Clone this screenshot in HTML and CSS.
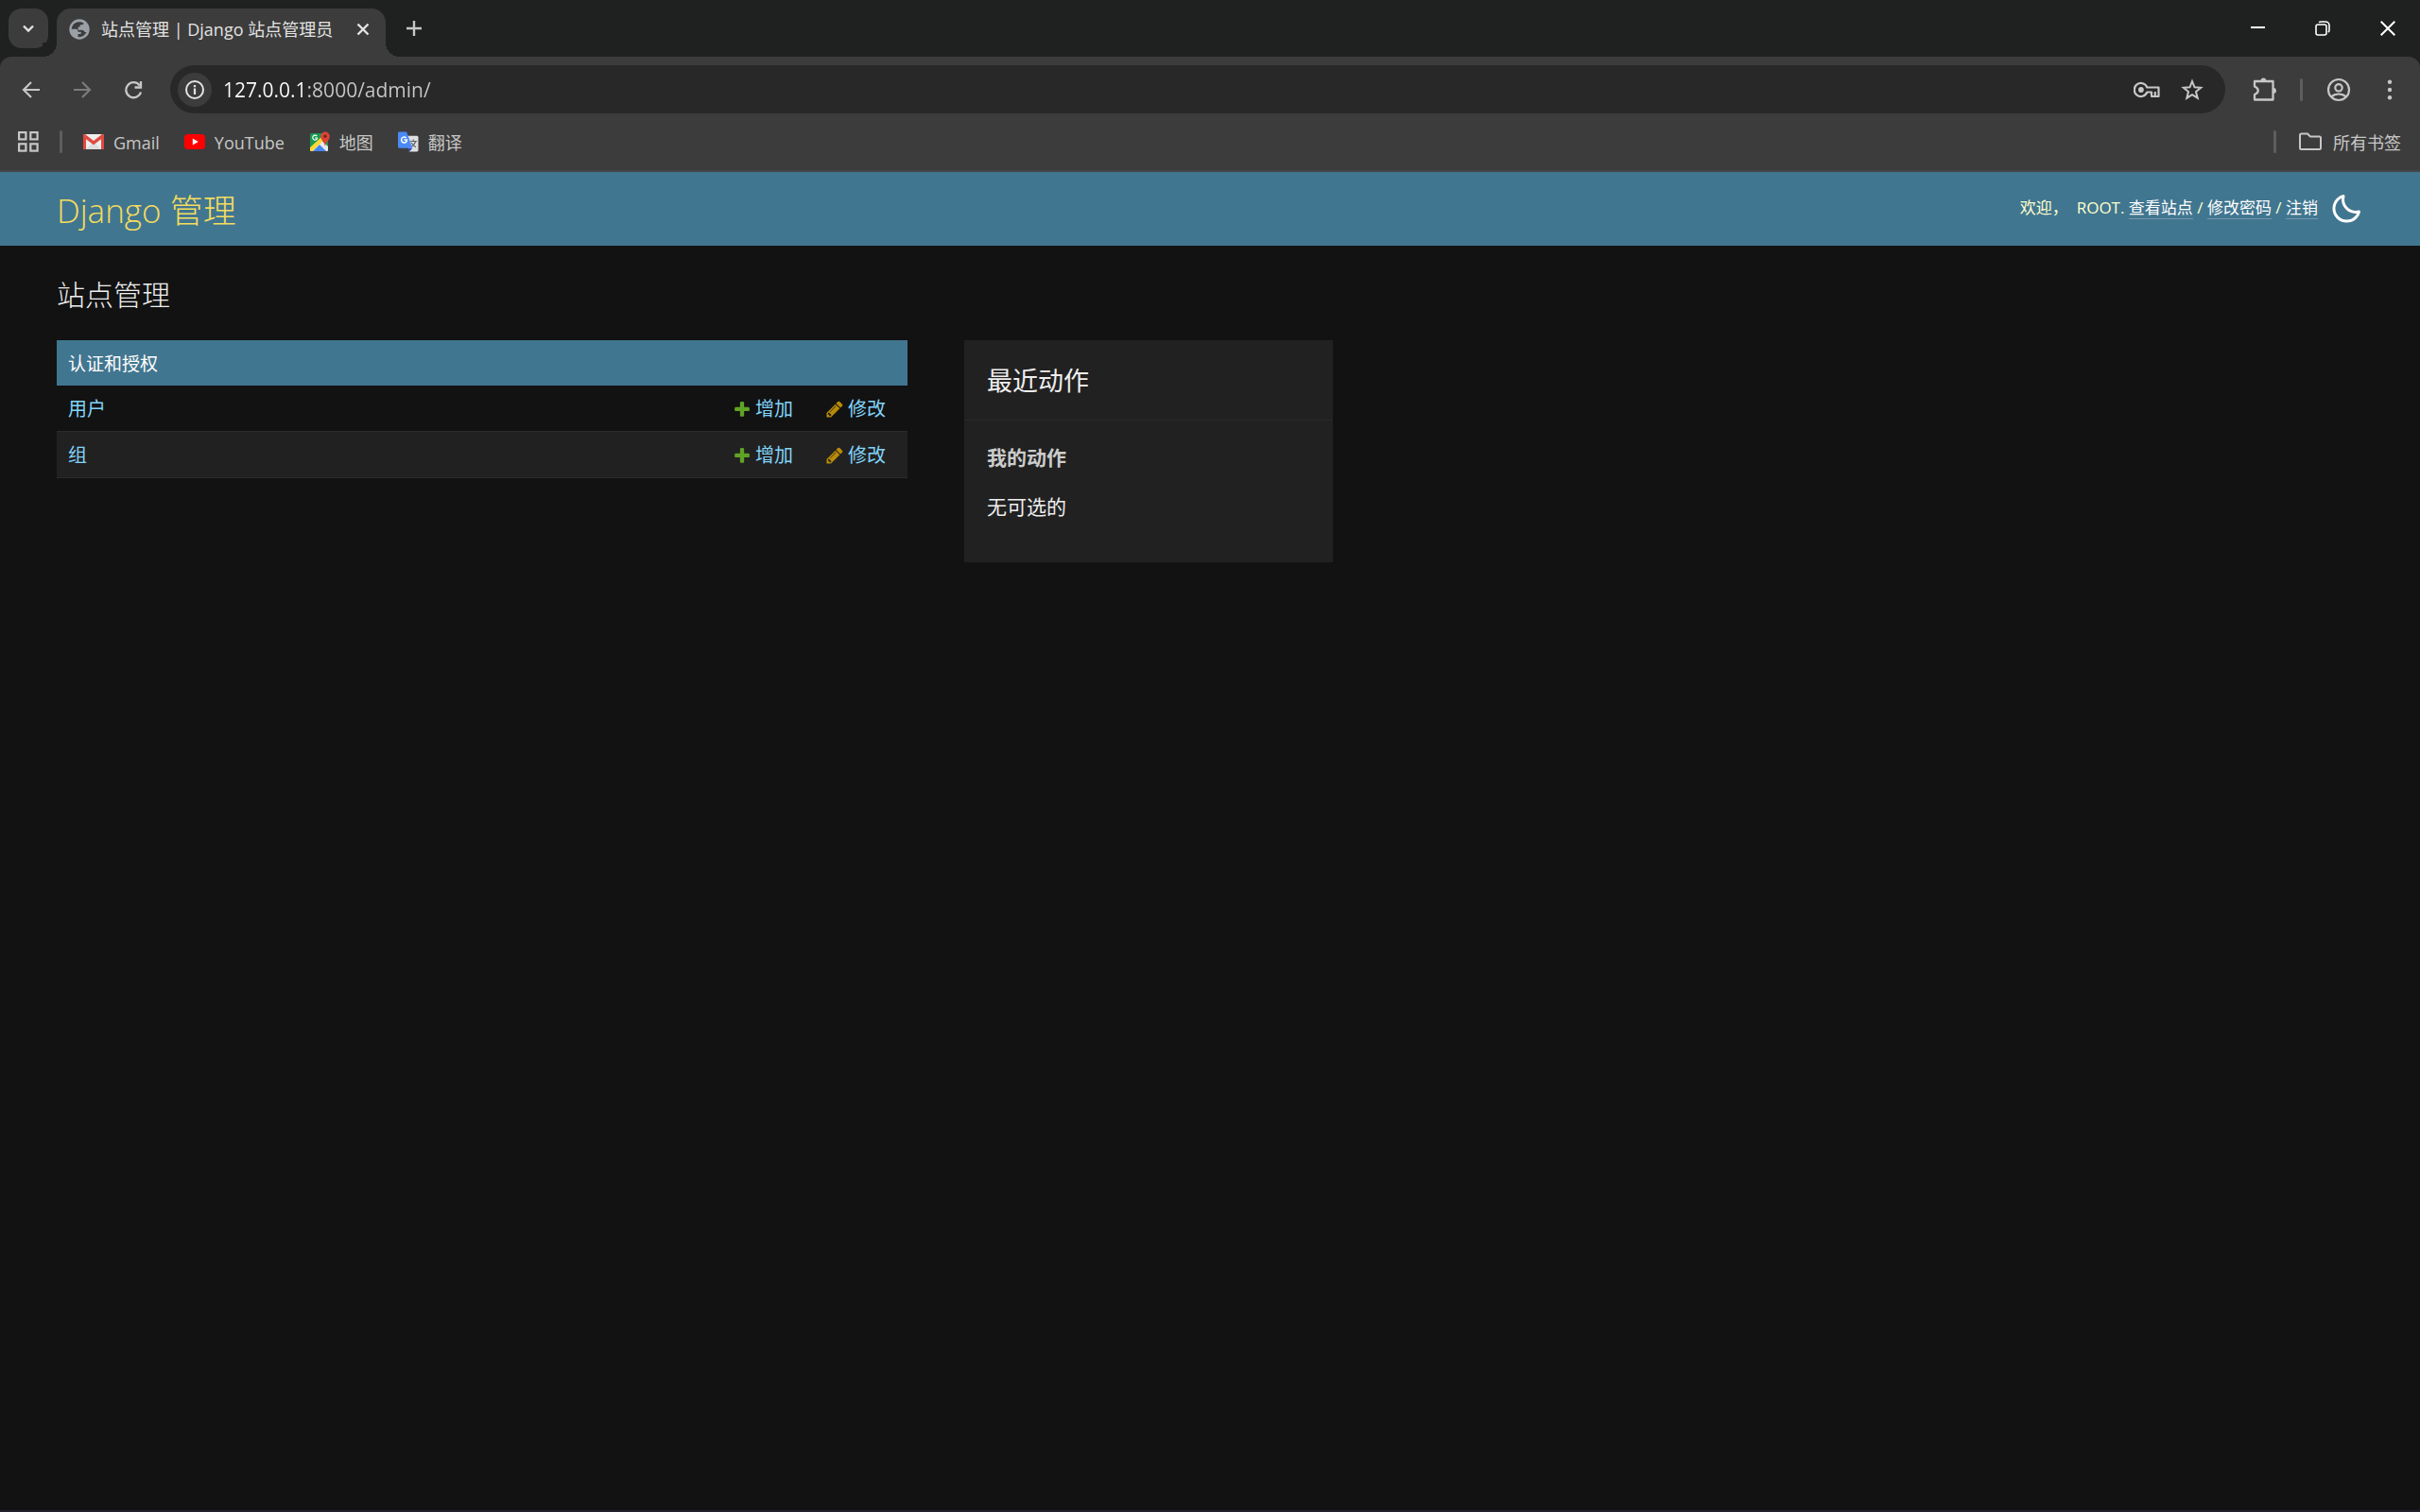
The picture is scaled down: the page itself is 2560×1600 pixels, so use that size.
FILE: index.html
```html
<!DOCTYPE html>
<html lang="zh-hans">
<head>
    <meta charset="UTF-8">
    <meta name="viewport" content="width=device-width, initial-scale=1.0">
    <title>站点管理 | Django 站点管理员</title>
    <link rel="stylesheet" href="styles.css">
</head>
<body>
    <div class="browser">
        <div class="tab-strip">
            <button class="tab-search" aria-label="搜索标签页">
                <svg width="14" height="14" viewBox="0 0 14 14"><path d="M2 4.5l5 5 5-5" fill="none" stroke="#e3e3e3" stroke-width="2.4"/></svg>
            </button>
            <div class="tab">
                <svg width="22" height="22" viewBox="0 0 22 22">
                    <circle cx="11" cy="11" r="10.7" fill="#9aa0a6"/>
                    <path d="M10 3.2C6 3.600 3 6.500 2.800 10.800H7c2 0 2.500 1.200 2.500 3h3.200v2.200H9.500v3c3.500.7 7.500-1.500 9-5-1.500.3-2.500-.2-3-1.700l-2.300-.6H9.600V8.500h2.100V6.200h2.200c1 0 1.500-.7 1.500-1.700-1.500-1-3.500-1.500-5.400-1.300z" fill="#3c3c3c"/>
                </svg>
                <span class="tab-title">站点管理 | Django 站点管理员</span>
                <button class="tab-close" aria-label="关闭">
                    <svg width="14" height="14" viewBox="0 0 14 14"><path d="M1.500 1.500l11 11M12.500 1.500l-11 11" stroke="#e3e3e3" stroke-width="2.400"/></svg>
                </button>
            </div>
            <button class="new-tab" aria-label="新标签页">
                <svg width="16" height="16" viewBox="0 0 16 16"><path d="M8 0v16M0 8h16" stroke="#c7c7c7" stroke-width="2.400"/></svg>
            </button>
            <div class="window-controls">
                <button aria-label="最小化"><svg width="16" height="16" viewBox="0 0 16 16"><path d="M1 7h15" stroke="#fff" stroke-width="2"/></svg></button>
                <button aria-label="还原"><svg width="16" height="16" viewBox="0 0 16 16" fill="none" stroke="#fff" stroke-width="1.600"><rect x="1" y="4" width="11" height="11" rx="2"/><path d="M4 1.500C5 1 5.500 1 6.500 1H11a4 4 0 0 1 4 4v4.500c0 1-.2 2-1 2.700"/></svg></button>
                <button aria-label="关闭窗口"><svg width="16" height="16" viewBox="0 0 16 16"><path d="M.7.7l14.600 14.600M15.300.7L.7 15.300" stroke="#fff" stroke-width="2"/></svg></button>
            </div>
        </div>

        <div class="chrome">
            <div class="toolbar">
                <button aria-label="后退"><svg width="20" height="20" viewBox="0 0 20 20"><path d="M19 10H2.500M10 2L2 10l8 8" fill="none" stroke="#c7c7c7" stroke-width="2.200"/></svg></button>
                <button aria-label="前进" disabled><svg width="20" height="20" viewBox="0 0 20 20"><path d="M1 10h16.500M10 2l8 8-8 8" fill="none" stroke="#7c7c7c" stroke-width="2.200"/></svg></button>
                <button aria-label="重新加载"><svg width="20" height="20" viewBox="0 0 20 20" fill="none" stroke="#c7c7c7" stroke-width="2.300"><path d="M16.800 5.500A8 8 0 1 0 18 12.500"/><path d="M18 1v6.500h-6.500"/></svg></button>
                <div class="omnibox">
                    <button class="site-info" aria-label="网站信息">
                        <svg width="22" height="22" viewBox="0 0 22 22"><circle cx="11" cy="11" r="9" fill="none" stroke="#e3e3e3" stroke-width="2"/><path d="M11 9.500V16M11 6v2.200" stroke="#e3e3e3" stroke-width="2.200"/></svg>
                    </button>
                    <input type="text" class="url" value="127.0.0.1:8000/admin/" aria-label="地址栏" spellcheck="false">
                    <button aria-label="管理密码">
                        <svg width="28" height="20" viewBox="0 0 28 20" fill="none" stroke="#c7c7c7" stroke-width="2.200"><path d="M14.300 7.500A7 7 0 1 0 14.300 12.500H19v4.500h7.500V7.500z" stroke-linejoin="round"/><circle cx="7.900" cy="10" r="2.900" fill="#c7c7c7" stroke="none"/><path d="M22.800 12v4.500"/></svg>
                    </button>
                    <button aria-label="为此标签页添加书签">
                        <svg width="24" height="24" viewBox="0 0 24 24"><path d="M12 3l2.500 6.300 6.700.5-5.200 4.300 1.700 6.600-5.700-3.600-5.700 3.600L8 14.100 2.800 9.800l6.700-.5z" fill="none" stroke="#c7c7c7" stroke-width="2"/></svg>
                    </button>
                </div>
                <button aria-label="扩展程序">
                    <svg width="26" height="26" viewBox="0 0 26 26"><path d="M3 4h19.500v19.500H3v-5.500c5-1.800 5-6.500 0-8.500z" fill="none" stroke="#c7c7c7" stroke-width="2.300" stroke-linejoin="round"/><path d="M9.500 3.500a2.900 2.900 0 0 1 5.800 0zM23 11a2.900 2.900 0 0 1 0 5.800z" fill="#c7c7c7"/></svg>
                </button>
                <span class="divider"></span>
                <button aria-label="用户">
                    <svg width="26" height="26" viewBox="0 0 26 26" fill="none" stroke="#c7c7c7" stroke-width="2.200"><circle cx="13" cy="13" r="11"/><circle cx="13" cy="10.800" r="3.700"/><path d="M5.300 20.500c4-4 11.400-4 15.400 0"/></svg>
                </button>
                <button aria-label="菜单">
                    <svg width="6" height="24" viewBox="0 0 6 24" fill="#c7c7c7"><circle cx="3" cy="3.700" r="2.200"/><circle cx="3" cy="12" r="2.200"/><circle cx="3" cy="20.300" r="2.200"/></svg>
                </button>
            </div>

            <div class="bookmarks">
                <button class="apps" aria-label="应用">
                    <svg width="22" height="22" viewBox="0 0 22 22" fill="none" stroke="#c7c7c7" stroke-width="2.200"><rect x="1.100" y="1.100" width="7.300" height="7.300"/><rect x="13.300" y="1.100" width="7.300" height="7.300"/><rect x="1.100" y="13.300" width="7.300" height="7.300"/><rect x="13.300" y="13.300" width="7.300" height="7.300"/></svg>
                </button>
                <span class="divider"></span>
                <a href="#" class="bookmark">
                    <svg width="22" height="22" viewBox="0 0 22 22"><rect y="3" width="22" height="16" rx="1.500" fill="#eee"/><path d="M3 19l8-8 8 8z" fill="#ddd"/><path d="M0 4.500C0 3.500.7 3 1.500 3H2l9 7 9-7h.5c.8 0 1.500.5 1.500 1.500V19h-3V8.200l-8 6-8-6V19H1.500C.7 19 0 18.500 0 17.500z" fill="#e04a3f"/></svg>
                    <span>Gmail</span>
                </a>
                <a href="#" class="bookmark">
                    <svg width="22" height="22" viewBox="0 0 22 22"><rect y="3" width="22" height="16" rx="4" fill="#f00"/><path d="M8.800 7.500v7l6-3.500z" fill="#fff"/></svg>
                    <span>YouTube</span>
                </a>
                <a href="#" class="bookmark">
                    <svg width="22" height="22" viewBox="0 0 22 22">
                        <rect x="1" y="2" width="19" height="19" rx="1.500" fill="#1a9850"/>
                        <path d="M1 20L13 9l7 7v3.500c0 1-.5 1.500-1.500 1.500h-16z" fill="#e8eaed"/>
                        <path d="M4 21l7-7 7 7z" fill="#4285f4"/>
                        <path d="M1 17L12.500 6.500l3 2.800L3.500 21H2c-.6 0-1-.5-1-1z" fill="#fdd835"/>
                        <path d="M9 7H6.200M8.200 5A2.500 2.500 0 1 0 8.800 7" fill="none" stroke="#fff" stroke-width="1.200"/>
                        <path d="M17 .5a4.800 4.800 0 0 0-4.800 4.800C12.200 9.500 16.200 11 17 16c.8-5 4.800-6.500 4.800-10.700A4.800 4.800 0 0 0 17 .5z" fill="#db4437"/><circle cx="17" cy="5.300" r="1.700" fill="#7b231c"/>
                    </svg>
                    <span>地图</span>
                </a>
                <a href="#" class="bookmark">
                    <svg width="22" height="22" viewBox="0 0 23 22">
                        <path d="M9 4.500h12c.8 0 1.500.7 1.500 1.500v14.500c0 .8-.7 1.500-1.500 1.500h-8.500z" fill="#dedede"/>
                        <path d="M13.500 10.500h7.500M17 8.500v2M19.500 10.500c-1 3-2.800 5-5 6M14.800 12c1 2 2.700 3.700 5 5" fill="none" stroke="#5f6368" stroke-width="1.200"/>
                        <path d="M12.500 22l-1.500-4h5z" fill="#3040b0"/>
                        <path d="M1.500 0H9.500l6.500 18H1.500C.7 18 0 17.300 0 16.500v-15C0 .7.7 0 1.500 0z" fill="#4a8af4"/>
                        <path d="M6.800 9h3.100c0 4-5.900 4.300-6.100 0 0-3.500 3.700-4 5.200-2.200" fill="none" stroke="#fff" stroke-width="1.500"/>
                    </svg>
                    <span>翻译</span>
                </a>
                <span class="divider divider-right"></span>
                <a href="#" class="bookmark all-bookmarks">
                    <svg width="24" height="20" viewBox="0 0 24 20"><path d="M2.500 1.500H9l3 3h9.500A1.500 1.500 0 0 1 23 6v10.500a1.500 1.500 0 0 1-1.500 1.500h-19A1.500 1.500 0 0 1 1 16.500V3a1.500 1.500 0 0 1 1.500-1.500z" fill="none" stroke="#c7c7c7" stroke-width="2"/></svg>
                    <span>所有书签</span>
                </a>
            </div>
        </div>
    </div>

    <header id="header">
        <a href="#" class="site-name">Django 管理</a>
        <div class="user-tools">
            <span>欢迎， &nbsp;ROOT. <a href="#">查看站点</a> / <a href="#">修改密码</a> / <a href="#">注销</a></span>
            <button class="theme-toggle" aria-label="切换主题">
                <svg width="36" height="36" viewBox="0 0 24 24" fill="#fff"><path d="M20.742 13.045a8.088 8.088 0 0 1-2.077.271c-2.135 0-4.140-.83-5.646-2.336a8.025 8.025 0 0 1-2.064-7.723A1 1 0 0 0 9.730 2.034a10.014 10.014 0 0 0-4.489 2.582c-3.898 3.898-3.898 10.243 0 14.143a9.937 9.937 0 0 0 7.072 2.930 9.930 9.930 0 0 0 7.070-2.929 10.007 10.007 0 0 0 2.583-4.491 1.001 1.001 0 0 0-1.224-1.224zm-2.772 4.301a7.947 7.947 0 0 1-5.656 2.343 7.953 7.953 0 0 1-5.658-2.344c-3.118-3.119-3.118-8.195 0-11.314a7.923 7.923 0 0 1 2.060-1.483 10.027 10.027 0 0 0 2.890 7.848 9.972 9.972 0 0 0 7.848 2.891 8.036 8.036 0 0 1-1.484 2.059z"/></svg>
            </button>
        </div>
    </header>

    <main class="content">
        <h1>站点管理</h1>
        <div class="dashboard">
            <div class="module">
                <table>
                    <caption><a href="#">认证和授权</a></caption>
                    <tr>
                        <th scope="row"><a href="#">用户</a></th>
                        <td class="col-add"><a href="#" class="action"><svg width="20" height="20" viewBox="0 0 1792 1792"><use href="#icon-add"/></svg>增加</a></td>
                        <td class="col-change"><a href="#" class="action"><svg width="20" height="20" viewBox="0 0 1792 1792"><use href="#icon-change"/></svg>修改</a></td>
                    </tr>
                    <tr>
                        <th scope="row"><a href="#">组</a></th>
                        <td class="col-add"><a href="#" class="action"><svg width="20" height="20" viewBox="0 0 1792 1792"><use href="#icon-add"/></svg>增加</a></td>
                        <td class="col-change"><a href="#" class="action"><svg width="20" height="20" viewBox="0 0 1792 1792"><use href="#icon-change"/></svg>修改</a></td>
                    </tr>
                </table>
            </div>
            <aside class="recent-actions">
                <h2>最近动作</h2>
                <h3>我的动作</h3>
                <p>无可选的</p>
            </aside>
        </div>
    </main>

    <!-- shared row icons -->
    <svg class="icon-defs" width="0" height="0">
        <defs>
            <path id="icon-add" fill="#5fa225" d="M1600 796v192q0 40-28 68t-68 28h-416v416q0 40-28 68t-68 28h-192q-40 0-68-28t-28-68v-416h-416q-40 0-68-28t-28-68v-192q0-40 28-68t68-28h416v-416q0-40 28-68t68-28h192q40 0 68 28t28 68v416h416q40 0 68 28t28 68z"/>
            <path id="icon-change" fill="#b78b08" d="M491 1536l91-91-235-235-91 91v107h128v128h107zm523-928q0-22-22-22-10 0-17 7l-542 542q-7 7-7 17 0 22 22 22 10 0 17-7l542-542q7-7 7-17zm-54-192l416 416-832 832h-416v-416zm683 96q0 53-37 90l-166 166-416-416 166-165q36-38 90-38 53 0 91 38l235 234q37 39 37 91z"/>
        </defs>
    </svg>
</body>
</html>
```

FILE: styles.css
```css
* {
    box-sizing: border-box;
}

body {
    margin: 0;
    min-height: 100vh;
    display: flex;
    flex-direction: column;
    background-color: #121212;
    border-bottom: 2px solid #20202e;
    color: #eee;
    font-family: "Open Sans", "Noto Sans CJK SC", sans-serif;
    font-size: 20px;
}

a {
    color: #81d4fa;
    text-decoration: none;
}

button {
    display: flex;
    align-items: center;
    justify-content: center;
    padding: 0;
    border: none;
    background: none;
    cursor: pointer;
}

svg {
    display: block;
    flex: none;
}

/* browser window */
.browser {
    background-color: #1f2120;
}

.tab-strip {
    display: flex;
    align-items: flex-start;
    height: 60px;
    padding: 9px 0 0 9px;
}

.tab-search {
    width: 42px;
    height: 42px;
    margin-right: 9px;
    border-radius: 14px;
    background-color: #3c3c3c;
}

.tab {
    position: relative;
    display: flex;
    align-items: center;
    width: 348px;
    height: 51px;
    padding: 0 9px 8px 13px;
    border-radius: 15px 15px 0 0;
    background-color: #3c3c3c;
}

.tab::before,
.tab::after {
    content: "";
    position: absolute;
    bottom: 0;
    width: 15px;
    height: 15px;
}

.tab::before {
    left: -15px;
    background: radial-gradient(circle at 0 0, #1f2120 15px, #3c3c3c 15px);
}

.tab::after {
    right: -15px;
    background: radial-gradient(circle at 100% 0, #1f2120 15px, #3c3c3c 15px);
}

.tab-title {
    flex: 1;
    margin-left: 12px;
    overflow: hidden;
    color: #e3e3e3;
    font-size: 18px;
    line-height: 28px;
    white-space: nowrap;
}

.tab-close {
    width: 30px;
    height: 30px;
}

.new-tab {
    width: 42px;
    height: 42px;
    margin-left: 9px;
}

.window-controls {
    display: flex;
    margin-left: auto;
}

.window-controls button {
    width: 69px;
    height: 42px;
}

.chrome {
    border-radius: 12px 12px 0 0;
    border-bottom: 2px solid #454545;
    background-color: #3c3c3c;
}

.toolbar {
    display: flex;
    align-items: center;
    height: 69px;
    padding: 0 5px 0 6px;
}

.toolbar button {
    width: 54px;
    height: 51px;
}

.omnibox {
    flex: 1;
    display: flex;
    align-items: center;
    height: 51px;
    margin: 0 14px 0 12px;
    padding: 0 11px 0 8px;
    border-radius: 26px;
    background-color: #282828;
}

.omnibox button {
    width: 48px;
}

.omnibox .site-info {
    width: 36px;
    height: 36px;
    border-radius: 50%;
    background-color: #3c3c3c;
}

/* host part is brighter than the path */
.url {
    flex: 1;
    min-width: 0;
    height: 36px;
    margin-left: 12px;
    padding: 0;
    border: none;
    outline: none;
    background: linear-gradient(to right, #fff 88px, #c7c7c7 88px);
    -webkit-background-clip: text;
    background-clip: text;
    color: transparent;
    font-family: inherit;
    font-size: 21px;
}

.divider {
    width: 3px;
    height: 24px;
    margin: 0 11px;
    border-radius: 2px;
    background-color: #5e5e5e;
}

.bookmarks {
    display: flex;
    align-items: center;
    height: 51px;
    padding: 0 20px 9px 19px;
}

.bookmarks .divider {
    margin: 0 22px;
}

.bookmarks .divider-right {
    margin: 0 24px 0 auto;
}

.bookmark {
    display: flex;
    align-items: center;
    gap: 10px;
    margin-right: 26px;
    color: #c7c7c7;
    font-size: 18px;
    line-height: 28px;
}

.bookmark span {
    padding-top: 2px;
}

.all-bookmarks {
    gap: 12px;
    margin-right: 0;
}

/* admin header */
#header {
    display: flex;
    align-items: center;
    justify-content: space-between;
    padding: 15px 60px;
    background-color: #417690;
    color: #ffc;
}

.site-name {
    padding-top: 4px;
    color: #f5dd5d;
    font-size: 35px;
    font-weight: 300;
    line-height: 44px;
}

.user-tools {
    display: flex;
    align-items: center;
    gap: 12px;
    font-size: 17px;
    line-height: 24px;
}

.user-tools span {
    padding-bottom: 2px;
}

.user-tools a {
    border-bottom: 1px solid rgba(255, 255, 255, 0.25);
    color: #fff;
}

/* dashboard */
.content {
    padding: 32px 60px;
}

h1 {
    margin: 0 0 28px;
    font-size: 30px;
    font-weight: 300;
    line-height: 40px;
}

.dashboard {
    display: grid;
    grid-template-columns: minmax(0, 900px) 390px;
    align-items: start;
    gap: 60px;
}

table {
    width: 100%;
    border-collapse: collapse;
    table-layout: fixed;
}

caption {
    padding: 13px 12px 11px;
    background-color: #417690;
    font-size: 19px;
    line-height: 24px;
    text-align: left;
}

caption a {
    color: #fff;
}

th,
td {
    padding: 13px 12px 11px;
    border-bottom: 1px solid #2b2b2b;
    font-size: 20px;
    font-weight: 400;
    line-height: 24px;
    text-align: left;
}

tr:nth-child(even) {
    background-color: #212121;
}

.col-add {
    width: 98px;
}

.col-change {
    width: 99px;
}

.action {
    display: flex;
    align-items: center;
    gap: 4px;
    white-space: nowrap;
}

.recent-actions {
    padding-bottom: 44px;
    background-color: #212121;
}

.recent-actions h2 {
    margin: 0 0 24px;
    padding: 25px 24px 23px;
    border-bottom: 1px solid #292929;
    font-size: 27px;
    font-weight: 400;
    line-height: 36px;
}

.recent-actions h3,
.recent-actions p {
    margin: 0;
    padding: 0 24px;
    font-size: 21px;
    line-height: 30px;
}

.recent-actions h3 {
    margin-bottom: 22px;
    color: #ccc;
}

.icon-defs {
    position: absolute;
}
```
